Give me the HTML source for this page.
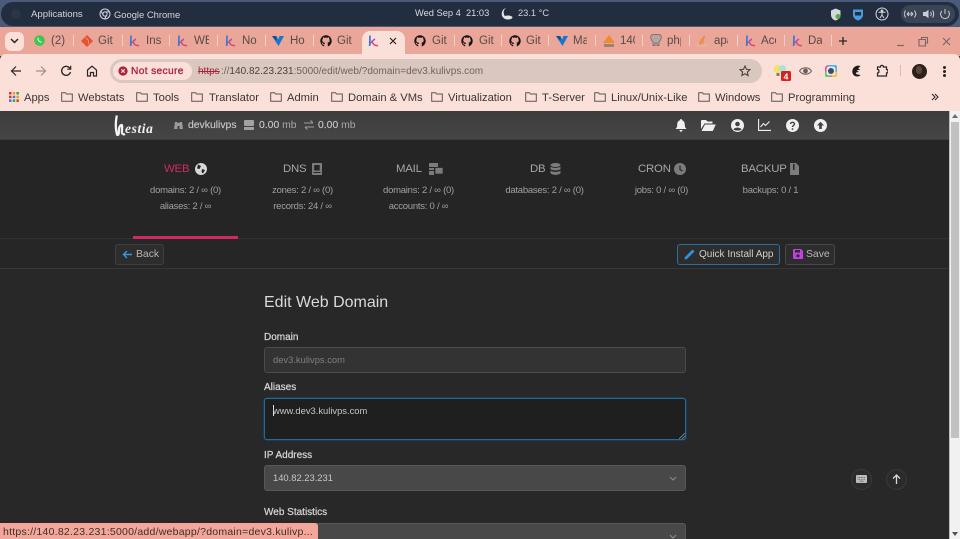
<!DOCTYPE html>
<html><head><meta charset="utf-8"><style>
*{box-sizing:border-box}
html,body{margin:0;padding:0;width:960px;height:539px;overflow:hidden;background:#282828}
body{position:relative;font-family:"Liberation Sans",sans-serif}
.a,.t,svg.i{position:absolute}
.t{white-space:nowrap;line-height:1}
.sep{position:absolute;top:35px;width:1px;height:11px;background:#f6d0c8}
.tt{position:absolute;top:35px;font-size:11.5px;line-height:13px;color:#5a4a47;white-space:nowrap;overflow:hidden;width:12px}
.bm{position:absolute;top:92px;font-size:11.2px;line-height:13px;color:#3b3534;white-space:nowrap}
.nt{position:absolute;font-size:11.4px;line-height:14px;color:#a6a6a6;white-space:nowrap;text-align:center;letter-spacing:-.2px}
.ns{position:absolute;font-size:9.5px;line-height:12px;color:#a0a0a0;white-space:nowrap;text-align:center;letter-spacing:-.25px}
.lb{position:absolute;left:264px;font-size:10px;line-height:12px;color:#d3d3d3;font-weight:400;-webkit-text-stroke:.25px #d3d3d3}
.f{position:absolute;left:264px;width:422px;border-radius:3px}
</style></head><body>

<!-- desktop top bar -->
<div class="a" style="left:0;top:0;width:960px;height:27px;background:#4a5a78"></div>
<div class="a" style="left:1px;top:2px;width:958px;height:24px;border-radius:12px;background:#222e40"></div>
<div class="a" style="left:11px;top:9px;width:10px;height:10px;border-radius:5px;background:#2a3546"></div>
<div class="t" style="left:31px;top:10px;font-size:9.6px;color:#d2d6db">Applications</div>
<svg class="i" style="left:99px;top:8px" width="12" height="12" viewBox="0 0 12 12" fill="none" stroke="#d2d6db" stroke-width="1"><circle cx="6" cy="6" r="5"/><circle cx="6" cy="6" r="2.100"/><path d="M6 3.900h4.600M4.200 7.100L2 3M7.800 7.100L5.500 11"/></svg>
<div class="t" style="left:114px;top:10px;font-size:9.4px;color:#d2d6db">Google Chrome</div>
<div class="t" style="left:415px;top:9px;font-size:9.3px;color:#d9dce0">Wed Sep 4&nbsp; 21:03</div>
<svg class="i" style="left:501px;top:8px" width="13" height="12" viewBox="0 0 13 12"><path d="M5 0C2.500 1.500 2 5 3.500 7.500C5 10 8 10 9.500 9.200C7 12.500 1.500 11 .8 7C.3 3.500 2.500 .5 5 0Z" fill="#e2e4e6"/><ellipse cx="7" cy="9.500" rx="4.500" ry="2" fill="#e2e4e6"/></svg>
<div class="t" style="left:518px;top:9px;font-size:9.3px;color:#cfd3d8">23.1 °C</div>
<svg class="i" style="left:830px;top:8px" width="12" height="13" viewBox="0 0 12 13"><path d="M5.500 .5L10.500 2.500V7C10.500 10 7.500 12 5.500 12.500C3.500 12 1 10 1 7V2.500Z" fill="#d3d8d8"/><circle cx="8" cy="8.500" r="2.500" fill="#52b04a"/></svg>
<svg class="i" style="left:852px;top:8px" width="12" height="13" viewBox="0 0 12 13"><path d="M1 1.500H11V7C11 10 8 12 6 12.500C4 12 1 10 1 7Z" fill="#4a9ae0"/><path d="M3 4H9V7.500H3Z" fill="#222e40"/></svg>
<svg class="i" style="left:875px;top:7px" width="14" height="14" viewBox="0 0 14 14" fill="none" stroke="#d4d7da"><circle cx="7" cy="7" r="6"/><circle cx="7" cy="3.900" r=".9" fill="#d4d7da"/><path d="M3.500 5.300H10.500M7 5.300V8M7 8L5 11M7 8L9 11" stroke-width="1"/></svg>
<div class="a" style="left:901px;top:5px;width:54px;height:18px;border-radius:9px;background:#3a4455"></div>
<svg class="i" style="left:904px;top:8px" width="50" height="12" viewBox="0 0 50 12" fill="none" stroke="#c9ced4" stroke-width="1"><path d="M3 6H9M3 6L5 4M3 6L5 8M9 6L7 4M9 6L7 8M1.500 2.500L0 6L1.500 9.500M10.500 2.500L12 6L10.500 9.500"/><path d="M19 4H21.500L24.500 1.800V10.200L21.500 8H19Z" fill="#c9ced4" stroke="none"/><path d="M26.500 4C27.500 5 27.500 7 26.500 8M28.500 2.500C30 4 30 8 28.500 9.500"/><path d="M41 1V6M38 3C35.500 5 36.500 10.500 41 10.500C45.500 10.500 46.500 5 44 3"/></svg>

<!-- tab strip -->
<div class="a" style="left:0;top:27px;width:960px;height:29px;background:#e9a699"></div>
<div class="a" style="left:5px;top:32px;width:19px;height:19px;border-radius:6px;background:#fbdfd9"></div>
<svg class="i" style="left:10px;top:38px" width="9" height="6" viewBox="0 0 9 6" fill="none" stroke="#2b2523" stroke-width="1.500"><path d="M1 1L4.500 4.500L8 1"/></svg>

<div class="sep" style="left:73px"></div><div class="sep" style="left:122px"></div><div class="sep" style="left:169px"></div><div class="sep" style="left:217px"></div><div class="sep" style="left:265px"></div><div class="sep" style="left:313px"></div><div class="sep" style="left:454px"></div><div class="sep" style="left:501px"></div><div class="sep" style="left:548px"></div><div class="sep" style="left:595px"></div><div class="sep" style="left:642px"></div><div class="sep" style="left:689px"></div><div class="sep" style="left:737px"></div><div class="sep" style="left:784px"></div><div class="sep" style="left:831px"></div>

<!-- active tab -->
<div class="a" style="left:362px;top:31px;width:43px;height:25px;border-radius:8px 8px 0 0;background:#fbdfd9"></div>

<!-- favicons -->
<svg class="i" style="left:34px;top:35px" width="11" height="11" viewBox="0 0 11 11"><circle cx="5.500" cy="5.500" r="5.300" fill="#3cc74f"/><path d="M3.500 3.200C3.200 5.500 5.500 7.800 7.800 7.500L7.300 6.300L6.300 6.600L4.500 4.700L4.800 3.700L4 2.800Z" fill="#fff"/></svg>
<svg class="i" style="left:81px;top:35px" width="12" height="12" viewBox="0 0 12 12"><path d="M6 0L12 6L6 12L0 6Z" fill="#e9502e"/><path d="M4.500 2.500L7.500 5.500V9M7.500 5.500" stroke="#e9a699" stroke-width=".8" fill="none"/></svg>
<svg width="0" height="0" style="position:absolute"><defs>
<symbol id="k" viewBox="0 0 11 12"><path d="M2 .5L1.700 11" stroke="#2f7fd0" stroke-width="1.700" fill="none"/><path d="M2 8.500C4 6.500 5.500 5 7 4" stroke="#b24cb8" stroke-width="1.500" fill="none"/><path d="M4.200 7C5 9 6.500 11 10 10.500" stroke="#e0456f" stroke-width="1.500" fill="none"/></symbol>
<symbol id="gh" viewBox="0 0 12 12"><path d="M6 0.300C2.800 .3 .3 2.800 .3 6C.3 8.500 2 10.700 4.200 11.500V9.700C2.700 10 2.300 9 2.100 8.500C1.700 7.900 1.200 7.700 1.900 7.600C2.700 7.700 3.100 8.500 3.300 8.700C4 9.300 4.600 9 4.900 8.800C5 8.300 5 7.900 4.500 7.700C3 7.500 2.300 6.800 2.300 5.400C2.300 4.700 2.500 4.200 2.900 3.800C2.700 3.300 2.800 2.700 3 2.300C3.600 2.200 4.300 2.700 4.600 2.900C5.500 2.600 6.500 2.600 7.400 2.900C7.700 2.700 8.400 2.200 9 2.300C9.200 2.700 9.300 3.300 9.100 3.800C9.500 4.200 9.700 4.700 9.700 5.400C9.700 6.800 9 7.500 7.500 7.700C7.800 8 7.800 8.400 7.800 8.900V11.500C10 10.700 11.700 8.500 11.700 6C11.700 2.800 9.200 .3 6 .3Z" fill="#141414"/></symbol>
<symbol id="v" viewBox="0 0 12 11"><path d="M0 1H4.500L6.200 4.500L7.500 1H12L6.500 11Z" fill="#1a76c9"/><path d="M0 1H3.500L5 4L3.500 5Z" fill="#154a8f"/></symbol>
<symbol id="fold" viewBox="0 0 12 10"><path d="M.7 .7H4.500L5.500 2H11.300V9.300H.7Z" fill="none" stroke="#5c5553" stroke-width="1"/></symbol>
</defs></svg>
<svg class="i" style="left:129px;top:35px" width="11" height="12"><use href="#k"/></svg>
<svg class="i" style="left:177px;top:35px" width="11" height="12"><use href="#k"/></svg>
<svg class="i" style="left:225px;top:35px" width="11" height="12"><use href="#k"/></svg>
<svg class="i" style="left:272px;top:35px" width="12" height="11"><use href="#v"/></svg>
<svg class="i" style="left:320px;top:35px" width="12" height="12"><use href="#gh"/></svg>
<svg class="i" style="left:368px;top:35px" width="11" height="12"><use href="#k"/></svg>
<svg class="i" style="left:389px;top:37px" width="8" height="8" viewBox="0 0 8 8" stroke="#2b2523" stroke-width="1.200"><path d="M1 1L7 7M7 1L1 7"/></svg>
<svg class="i" style="left:414px;top:35px" width="12" height="12"><use href="#gh"/></svg>
<svg class="i" style="left:461px;top:35px" width="12" height="12"><use href="#gh"/></svg>
<svg class="i" style="left:509px;top:35px" width="12" height="12"><use href="#gh"/></svg>
<svg class="i" style="left:556px;top:35px" width="12" height="11"><use href="#v"/></svg>
<svg class="i" style="left:603px;top:35px" width="12" height="12" viewBox="0 0 12 12"><path d="M6 0L12 8H0Z" fill="#ef8a2e"/><path d="M1 12V9H11V12Z" fill="#a08070"/></svg>
<svg class="i" style="left:650px;top:34px" width="12" height="13" viewBox="0 0 12 13"><path d="M1 1.500C3 0 9 0 11 1.500C12 4 10 7 9 8V11.500H7V9H5V11.500H3V8C2 7 0 4 1 1.500Z" fill="#b4a6a2" stroke="#6d615e" stroke-width=".7"/></svg>
<svg class="i" style="left:697px;top:35px" width="11" height="12" viewBox="0 0 11 12"><path d="M2 9L7 7M2.500 7L7 4.500M4 5L7.500 2.500M5.500 3L8 1" stroke="#ef8a3e" stroke-width="1.300" fill="none"/><path d="M1 8V11H9V8" stroke="#e7b8a0" stroke-width="1.200" fill="none"/></svg>
<svg class="i" style="left:745px;top:35px" width="11" height="12"><use href="#k"/></svg>
<svg class="i" style="left:792px;top:35px" width="11" height="12"><use href="#k"/></svg>

<!-- tab titles -->
<div class="tt" style="left:51px;width:16px">(2)</div>
<div class="tt" style="left:98px;width:15px">Git</div>
<div class="tt" style="left:146px;width:15px">Insi</div>
<div class="tt" style="left:194px;width:15px">WE</div>
<div class="tt" style="left:242px;width:15px">No</div>
<div class="tt" style="left:290px;width:15px">Ho</div>
<div class="tt" style="left:337px;width:15px">Git</div>
<div class="tt" style="left:432px;width:15px">Git</div>
<div class="tt" style="left:479px;width:15px">Git</div>
<div class="tt" style="left:526px;width:15px">Git</div>
<div class="tt" style="left:573px;width:14px">Ma</div>
<div class="tt" style="left:620px;width:15px">140</div>
<div class="tt" style="left:667px;width:14px">php</div>
<div class="tt" style="left:714px;width:14px">apa</div>
<div class="tt" style="left:761px;width:15px">Acc</div>
<div class="tt" style="left:808px;width:14px">Dal</div>
<svg class="i" style="left:838px;top:36px" width="10" height="10" stroke="#2b2523" stroke-width="1.300"><path d="M5 1V9M1 5H9"/></svg>
<svg class="i" style="left:896px;top:36px" width="60" height="11" fill="none" stroke="#7b6663" stroke-width="1.100"><path d="M1 9.500H8"/><path d="M23 3.500H29.500V10H23ZM25.500 3.500V1.500H31.500V7H29.500"/><path d="M47 2L54 9M54 2L47 9"/></svg>

<!-- toolbar -->
<div class="a" style="left:0;top:54px;width:960px;height:57px;background:#fbdfd9;border-radius:6px 6px 0 0"></div>
<svg class="i" style="left:10px;top:65px" width="12" height="12" fill="none" stroke="#2b2523" stroke-width="1.200"><path d="M11 6H2M6 1.500L1.500 6L6 10.500"/></svg>
<svg class="i" style="left:35px;top:65px" width="12" height="12" fill="none" stroke="#9f908c" stroke-width="1.200"><path d="M1 6H10M6 1.500L10.500 6L6 10.500"/></svg>
<svg class="i" style="left:60px;top:65px" width="12" height="12" viewBox="0 0 12 12" fill="none" stroke="#2b2523" stroke-width="1.300"><path d="M10 3.500A4.500 4.500 0 1 0 10.500 7"/><path d="M10.700 .8V4.200H7.300" stroke-width="1.200"/></svg>
<svg class="i" style="left:86px;top:65px" width="12" height="12" viewBox="0 0 12 12" fill="none" stroke="#2b2523" stroke-width="1.200"><path d="M1.500 5L6 1.200L10.500 5V11H7.500V7.500H4.500V11H1.500Z"/></svg>

<div class="a" style="left:110px;top:59px;width:652px;height:24px;border-radius:12px;background:#dac7c0"></div>
<div class="a" style="left:113px;top:62px;width:79px;height:18px;border-radius:9px;background:#fbdfd9"></div>
<svg class="i" style="left:118px;top:66px" width="10" height="10" viewBox="0 0 10 10"><circle cx="5" cy="5" r="4.600" fill="#a8233a"/><path d="M3.300 3.300L6.700 6.700M6.700 3.300L3.300 6.700" stroke="#fbdfd9" stroke-width="1.200"/></svg>
<div class="t" style="left:131px;top:67px;font-size:10.2px;color:#a8233a;-webkit-text-stroke:.3px #a8233a;letter-spacing:.35px">Not secure</div>
<div class="t" style="left:198px;top:67px;font-size:10px;color:#a8233a;text-decoration:line-through">https</div>
<div class="t" style="left:221px;top:67px;font-size:10px;letter-spacing:.02px;color:#4c413f"><span style="color:#6e6260">://</span>140.82.23.231<span style="color:#6e6260">:5000/edit/web/?domain=dev3.kulivps.com</span></div>
<svg class="i" style="left:739px;top:65px" width="12" height="12" viewBox="0 0 12 12" fill="none" stroke="#4c413f" stroke-width="1.100"><path d="M6 1L7.500 4.300L11 4.700L8.400 7L9.100 10.600L6 8.800L2.900 10.600L3.600 7L1 4.700L4.500 4.300Z"/></svg>

<svg class="i" style="left:773px;top:64px" width="18" height="17" viewBox="0 0 18 17"><circle cx="5" cy="5" r="4.300" fill="#f2e26a"/><circle cx="9.500" cy="4.500" r="3.500" fill="#a6e2e0"/><rect x="3.500" y="9" width="3" height="3" fill="#8a7a60"/><rect x="8" y="7" width="10" height="10" rx="1.500" fill="#d3221f"/><text x="13" y="15.500" text-anchor="middle" font-size="8.500" font-weight="bold" fill="#fff" font-family="Liberation Sans">4</text></svg>
<svg class="i" style="left:799px;top:66px" width="13" height="10" viewBox="0 0 13 10"><path d="M.5 5C3 .8 10 .8 12.500 5C10 9.200 3 9.200 .5 5Z" fill="none" stroke="#6a5f5c" stroke-width="1.100"/><circle cx="6.500" cy="5" r="2.400" fill="#6a5f5c"/></svg>
<svg class="i" style="left:825px;top:65px" width="12" height="12" viewBox="0 0 12 12"><rect x="0" y="0" width="12" height="12" rx="3.500" fill="#e846a8"/><path d="M2 0H10A2 2 0 0 1 12 2V6H6Z" fill="#3bb8e8"/><path d="M12 6V10A2 2 0 0 1 10 12H6Z" fill="#f2c23a"/><path d="M6 12H2A2 2 0 0 1 0 10V6Z" fill="#56d05a"/><rect x="1.500" y="1.500" width="9" height="9" rx="2.500" fill="#f8e4e0"/><circle cx="6" cy="6" r="3" fill="#34506a"/></svg>
<svg class="i" style="left:851px;top:65px" width="11" height="12" viewBox="0 0 11 12"><path d="M9.500 1C7 0 4 1 2.500 3C.5 5.500 1 9.500 4 11C6 12 8.500 11.500 9.500 10L7 9.500C5.500 9.500 4.500 8.500 5 7.500L8 7L5.500 5.500L9.500 4.500L7 3.500Z" fill="#1d1a19"/></svg>
<svg class="i" style="left:876px;top:64px" width="12" height="13" viewBox="0 0 12 13" fill="none" stroke="#2b2523" stroke-width="1.200"><path d="M1.500 3H4.500C4.500 .8 7.500 .8 7.500 3H10.500V5.500C12.500 5.500 12.500 9 10.500 9V12H1.500V9C3.500 9 3.500 5.500 1.500 5.500Z"/></svg>
<div class="a" style="left:900px;top:65px;width:1px;height:11px;background:#eab4a9"></div>
<div class="a" style="left:912px;top:64px;width:15px;height:15px;border-radius:8px;background:#2b201c"></div>
<div class="a" style="left:916px;top:66px;width:6px;height:8px;border-radius:3px;background:#5f4336"></div>
<div class="a" style="left:943px;top:66px;width:3px;height:3px;border-radius:2px;background:#2b2523"></div>
<div class="a" style="left:943px;top:70px;width:3px;height:3px;border-radius:2px;background:#2b2523"></div>
<div class="a" style="left:943px;top:74px;width:3px;height:3px;border-radius:2px;background:#2b2523"></div>

<!-- bookmarks -->
<svg class="i" style="left:9px;top:92px" width="10" height="10" viewBox="0 0 10 10"><rect x="0" y="0" width="2.500" height="2.500" fill="#d8392c"/><rect x="3.700" y="0" width="2.500" height="2.500" fill="#e0a020"/><rect x="7.400" y="0" width="2.500" height="2.500" fill="#3aa04a"/><rect x="0" y="3.700" width="2.500" height="2.500" fill="#d8392c"/><rect x="3.700" y="3.700" width="2.500" height="2.500" fill="#3a78d8"/><rect x="7.400" y="3.700" width="2.500" height="2.500" fill="#e0a020"/><rect x="0" y="7.400" width="2.500" height="2.500" fill="#3a78d8"/><rect x="3.700" y="7.400" width="2.500" height="2.500" fill="#3aa04a"/><rect x="7.400" y="7.400" width="2.500" height="2.500" fill="#d8392c"/></svg>
<div class="bm" style="left:24px">Apps</div>
<svg class="i" style="left:61px;top:92px" width="12" height="10"><use href="#fold"/></svg><div class="bm" style="left:78px">Webstats</div>
<svg class="i" style="left:136px;top:92px" width="12" height="10"><use href="#fold"/></svg><div class="bm" style="left:153px">Tools</div>
<svg class="i" style="left:191px;top:92px" width="12" height="10"><use href="#fold"/></svg><div class="bm" style="left:209px">Translator</div>
<svg class="i" style="left:270px;top:92px" width="12" height="10"><use href="#fold"/></svg><div class="bm" style="left:287px">Admin</div>
<svg class="i" style="left:331px;top:92px" width="12" height="10"><use href="#fold"/></svg><div class="bm" style="left:348px">Domain &amp; VMs</div>
<svg class="i" style="left:431px;top:92px" width="12" height="10"><use href="#fold"/></svg><div class="bm" style="left:448px">Virtualization</div>
<svg class="i" style="left:525px;top:92px" width="12" height="10"><use href="#fold"/></svg><div class="bm" style="left:542px">T-Server</div>
<svg class="i" style="left:594px;top:92px" width="12" height="10"><use href="#fold"/></svg><div class="bm" style="left:611px">Linux/Unix-Like</div>
<svg class="i" style="left:698px;top:92px" width="12" height="10"><use href="#fold"/></svg><div class="bm" style="left:715px">Windows</div>
<svg class="i" style="left:771px;top:92px" width="12" height="10"><use href="#fold"/></svg><div class="bm" style="left:788px">Programming</div>
<svg class="i" style="left:931px;top:93px" width="8" height="8" fill="none" stroke="#2b2523" stroke-width="1"><path d="M1 1L4 4L1 7M4 1L7 4L4 7"/></svg>

<!-- page -->
<div class="a" style="left:0;top:111px;width:950px;height:428px;background:#282828"></div>
<div class="a" style="left:0;top:111px;width:950px;height:29px;background:linear-gradient(#3c3c3c,#464646);border-bottom:1px solid #3a3a3a"></div>
<div class="a" style="left:0;top:140px;width:950px;height:98px;background:#252525"></div>
<div class="a" style="left:0;top:238px;width:950px;height:31px;background:#262626;border-top:1px solid #323232;border-bottom:1px solid #363636"></div>
<div class="a" style="left:133px;top:236px;width:105px;height:3px;background:#d12a63"></div>

<!-- header -->
<svg class="i" style="left:114px;top:114px" width="12" height="22" viewBox="0 0 12 22"><path d="M2.800 1.500C1.500 8 1.500 15 3 20.500C4 21.500 5 20.500 4.800 18C4.800 15 5.500 11.500 7.500 11C9 11.500 7.500 16 8 19C8.500 20.500 10 20.500 11 20" fill="none" stroke="#f2f2f2" stroke-width="2.300"/></svg>
<div class="t" style="left:125px;top:122px;font-family:'Liberation Serif',serif;font-style:italic;font-weight:bold;font-size:13.500px;color:#f0f0f0;letter-spacing:.6px">estia</div>
<svg class="i" style="left:173px;top:120px" width="11" height="10" viewBox="0 0 11 10"><path d="M1 9L2 2H4.500V9ZM6.500 9V2H9L10 9Z" fill="#9b9b9b"/><rect x="4" y="3" width="3" height="3" fill="#9b9b9b"/></svg>
<div class="t" style="left:188px;top:121px;font-size:10.4px;color:#c6c6c6;-webkit-text-stroke:.15px #c6c6c6">devkulivps</div>
<svg class="i" style="left:244px;top:120px" width="11" height="10" viewBox="0 0 11 10"><rect y="0" width="10" height="6" rx="1" fill="#a2a2a2"/><rect y="7" width="10" height="3" rx=".7" fill="#a2a2a2"/></svg>
<div class="t" style="left:259px;top:121px;font-size:10.4px;color:#c6c6c6"><span style="-webkit-text-stroke:.15px #c6c6c6">0.00</span> <span style="color:#a8a8a8">mb</span></div>
<svg class="i" style="left:304px;top:120px" width="10" height="10" fill="none" stroke="#a0a0a0" stroke-width="1"><path d="M0 3H9M6.500 .5L9 3M10 7H1M3.500 9.500L1 7"/></svg>
<div class="t" style="left:318px;top:121px;font-size:10.4px;color:#c6c6c6"><span style="-webkit-text-stroke:.15px #c6c6c6">0.00</span> <span style="color:#a8a8a8">mb</span></div>

<svg class="i" style="left:675px;top:119px" width="12" height="13" viewBox="0 0 12 13"><path d="M6 0C7 0 7 1 7 1.300C9 2 9.800 3.500 9.800 6C9.800 8 10.500 9 11.500 10H.5C1.500 9 2.200 8 2.200 6C2.200 3.500 3 2 5 1.300C5 1 5 0 6 0ZM4.500 11H7.500C7.500 12 6.800 12.700 6 12.700C5.200 12.700 4.500 12 4.500 11Z" fill="#f0f0f0"/></svg>
<svg class="i" style="left:701px;top:120px" width="15" height="11" viewBox="0 0 15 11"><path d="M0 1A1 1 0 0 1 1 0H5L6.500 1.500H11.500V3.500H3.500L0 9Z" fill="#f0f0f0"/><path d="M4 4.500H14.800L11.800 11H.5Z" fill="#f0f0f0"/></svg>
<svg class="i" style="left:731px;top:119px" width="13" height="13" viewBox="0 0 13 13"><circle cx="6.500" cy="6.500" r="6.500" fill="#f0f0f0"/><circle cx="6.500" cy="5" r="2.300" fill="#424242"/><path d="M2.500 10.500C3.500 8 9.500 8 10.500 10.500C9 12 4 12 2.500 10.500Z" fill="#424242"/></svg>
<svg class="i" style="left:758px;top:119px" width="13" height="12" fill="none" stroke="#f0f0f0" stroke-width="1.100"><path d="M.6 0V11.400H13"/><path d="M2.500 8L5.500 4.500L7.500 6.500L11.500 2.500"/></svg>
<svg class="i" style="left:786px;top:119px" width="13" height="13" viewBox="0 0 13 13"><circle cx="6.500" cy="6.500" r="6.500" fill="#f0f0f0"/><path d="M4.500 5C4.500 2.800 8.500 2.800 8.500 5C8.500 6.500 6.500 6.300 6.500 8" fill="none" stroke="#424242" stroke-width="1.400"/><circle cx="6.500" cy="10" r=".9" fill="#424242"/></svg>
<svg class="i" style="left:814px;top:119px" width="13" height="13" viewBox="0 0 13 13"><circle cx="6.500" cy="6.500" r="6.500" fill="#f0f0f0"/><path d="M6.500 2.800L10 6.500H7.800V10H5.200V6.500H3Z" fill="#424242"/></svg>

<!-- nav stats -->
<div class="nt" style="left:164px;top:162px;color:#d12a63">WEB</div>
<svg class="i" style="left:195px;top:163px" width="12" height="12" viewBox="0 0 12 12"><circle cx="6" cy="6" r="6" fill="#d8d8d8"/><path d="M3 1.500L6 3L4.500 6L2 5.500ZM7 6L10 7L8 10.500L6.500 9Z" fill="#252525"/></svg>
<div class="ns" style="left:133px;top:185px;width:105px">domains: 2 / ∞ (0)</div>
<div class="ns" style="left:133px;top:201px;width:105px">aliases: 2 / ∞</div>

<div class="nt" style="left:283px;top:162px">DNS</div>
<svg class="i" style="left:312px;top:163px" width="10" height="12" viewBox="0 0 10 12"><path d="M0 1A1 1 0 0 1 1 0H10V12H1A1 1 0 0 1 0 11Z" fill="#7c7c7c"/><rect x="2.200" y="2" width="5.500" height="5.500" fill="#252525"/><rect x="1.500" y="9" width="7" height="1" fill="#252525"/></svg>
<div class="ns" style="left:250px;top:185px;width:105px">zones: 2 / ∞ (0)</div>
<div class="ns" style="left:250px;top:201px;width:105px">records: 24 / ∞</div>

<div class="nt" style="left:396px;top:162px">MAIL</div>
<svg class="i" style="left:429px;top:163px" width="14" height="12" viewBox="0 0 14 12"><rect x="0" y="0" width="9" height="4" fill="#7c7c7c"/><rect x="0" y="5" width="5" height="2" fill="#7c7c7c"/><rect x="0" y="8" width="5" height="4" fill="#7c7c7c"/><rect x="6" y="4.500" width="8" height="6.500" fill="#7c7c7c" stroke="#252525" stroke-width=".7"/></svg>
<div class="ns" style="left:366px;top:185px;width:105px">domains: 2 / ∞ (0)</div>
<div class="ns" style="left:366px;top:201px;width:105px">accounts: 0 / ∞</div>

<div class="nt" style="left:530px;top:162px">DB</div>
<svg class="i" style="left:550px;top:163px" width="11" height="12" viewBox="0 0 11 12" fill="#7c7c7c"><ellipse cx="5.500" cy="2" rx="5" ry="2"/><path d="M.5 3.500C2 5.300 9 5.300 10.500 3.500V6C9 7.800 2 7.800 .5 6ZM.5 7.500C2 9.300 9 9.300 10.500 7.500V10C9 12.500 2 12.500 .5 10Z"/></svg>
<div class="ns" style="left:492px;top:185px;width:105px">databases: 2 / ∞ (0)</div>

<div class="nt" style="left:638px;top:162px">CRON</div>
<svg class="i" style="left:674px;top:163px" width="12" height="12" viewBox="0 0 12 12"><circle cx="6" cy="6" r="6" fill="#7c7c7c"/><path d="M6 2.500V6.500L8.500 8" fill="none" stroke="#252525" stroke-width="1.200"/></svg>
<div class="ns" style="left:609px;top:185px;width:105px">jobs: 0 / ∞ (0)</div>

<div class="nt" style="left:741px;top:162px">BACKUP</div>
<svg class="i" style="left:790px;top:163px" width="9" height="12" viewBox="0 0 9 12"><path d="M0 0H6L9 3V12H0Z" fill="#7c7c7c"/><rect x="3" y="1" width="1.500" height="6" fill="#252525"/></svg>
<div class="ns" style="left:718px;top:185px;width:105px">backups: 0 / 1</div>

<!-- toolbar buttons -->
<div class="a" style="left:115px;top:244px;width:49px;height:21px;border:1px solid #3f3f3f;border-radius:3px;background:#2d2d2d"></div>
<svg class="i" style="left:122px;top:250px" width="10" height="9" fill="none" stroke="#3a96e0" stroke-width="1.400"><path d="M10 4.500H1.500M5 1L1.500 4.500L5 8"/></svg>
<div class="t" style="left:136px;top:250px;font-size:10.4px;color:#b8b8b8">Back</div>

<div class="a" style="left:677px;top:244px;width:103px;height:21px;border:1px solid #2b6f9f;border-radius:3px;background:#2d2d2d"></div>
<svg class="i" style="left:684px;top:249px" width="11" height="11" viewBox="0 0 11 11"><path d="M8.500 .5L10.500 2.500L3 10L.5 10.500L1 8Z" fill="#2f8fe0"/></svg>
<div class="t" style="left:699px;top:250px;font-size:10px;color:#cfcfcf">Quick Install App</div>

<div class="a" style="left:785px;top:244px;width:50px;height:21px;border:1px solid #484848;border-radius:3px;background:#2d2d2d"></div>
<svg class="i" style="left:793px;top:249px" width="10" height="10" viewBox="0 0 10 10"><path d="M1 0H8L10 2V9A1 1 0 0 1 9 10H1A1 1 0 0 1 0 9V1A1 1 0 0 1 1 0Z" fill="#c040e0"/><rect x="2" y="1" width="5" height="2.500" fill="#2d2d2d"/><circle cx="5" cy="6.800" r="1.600" fill="#2d2d2d"/></svg>
<div class="t" style="left:806px;top:250px;font-size:10.4px;color:#b8b8b8">Save</div>

<!-- form -->
<div class="t" style="left:264px;top:295px;font-size:16px;color:#d9d9d9">Edit Web Domain</div>

<div class="lb" style="top:332px">Domain</div>
<div class="f" style="top:347px;height:26px;background:#333;border:1px solid #4b4b4b"></div>
<div class="t" style="left:273px;top:355px;font-size:9.4px;color:#808080">dev3.kulivps.com</div>

<div class="lb" style="top:382px">Aliases</div>
<div class="f" style="top:398px;height:42px;background:#1f1f1f;border:1px solid #1f6a9e;box-shadow:0 0 0 .5px #174e75"></div>
<div class="a" style="left:273px;top:405px;width:1px;height:11px;background:#e0e0e0"></div>
<div class="t" style="left:273px;top:406px;font-size:9.4px;color:#c6c6c6">www.dev3.kulivps.com</div>
<svg class="i" style="left:679px;top:433px" width="6" height="6" stroke="#8a8a8a" stroke-width=".8"><path d="M0 6L6 0M3 6L6 3"/></svg>

<div class="lb" style="top:450px">IP Address</div>
<div class="f" style="top:465px;height:26px;background:#484848;border:1px solid #585858"></div>
<div class="t" style="left:273px;top:473px;font-size:9.4px;color:#c6c6c6">140.82.23.231</div>
<svg class="i" style="left:669px;top:476px" width="8" height="5" fill="none" stroke="#8e8e8e" stroke-width="1"><path d="M1 1L4 4L7 1"/></svg>

<div class="lb" style="top:507px">Web Statistics</div>
<div class="f" style="top:523px;height:26px;background:#484848;border:1px solid #585858"></div>
<svg class="i" style="left:669px;top:534px" width="8" height="5" fill="none" stroke="#8e8e8e" stroke-width="1"><path d="M1 1L4 4L7 1"/></svg>

<!-- floating buttons -->
<div class="a" style="left:851px;top:469px;width:21px;height:21px;border-radius:11px;background:#2b2b2b;border:1px solid #3a3a3a"></div>
<svg class="i" style="left:856px;top:475px" width="11" height="9" viewBox="0 0 11 9"><rect width="11" height="8" rx="1" fill="#bdbdbd"/><path d="M1.500 2.500H9.500M1.500 4.300H9.500" stroke="#6d6d6d" stroke-dasharray="1 .6" stroke-width=".9"/><path d="M3.500 6.200H7.500" stroke="#6d6d6d" stroke-width=".9"/></svg>
<div class="a" style="left:886px;top:469px;width:21px;height:21px;border-radius:11px;background:#2b2b2b;border:1px solid #3a3a3a"></div>
<svg class="i" style="left:892px;top:474px" width="9" height="10" fill="none" stroke="#d8d8d8" stroke-width="1.300"><path d="M4.500 10V1.500M1 4.500L4.500 1L8 4.500"/></svg>

<!-- scrollbar -->
<div class="a" style="left:949px;top:111px;width:11px;height:428px;background:#f1f1f1;border-left:1px solid #bbb"></div>
<div class="a" style="left:951px;top:122px;width:8px;height:316px;background:#c1c1c1"></div>
<svg class="i" style="left:952px;top:114px" width="6" height="4"><path d="M0 4L3 0L6 4Z" fill="#6a6a6a"/></svg>
<svg class="i" style="left:952px;top:532px" width="6" height="4"><path d="M0 0L3 4L6 0Z" fill="#505050"/></svg>

<!-- status bubble -->
<div class="a" style="left:0;top:523px;width:318px;height:16px;background:#f3a79a;border-radius:0 3px 0 0"></div>
<div class="t" style="left:3px;top:527px;font-size:10.5px;color:#3c2f2c;letter-spacing:.24px">https://140.82.23.231:5000/add/webapp/?domain=dev3.kulivp...</div>
</body></html>
